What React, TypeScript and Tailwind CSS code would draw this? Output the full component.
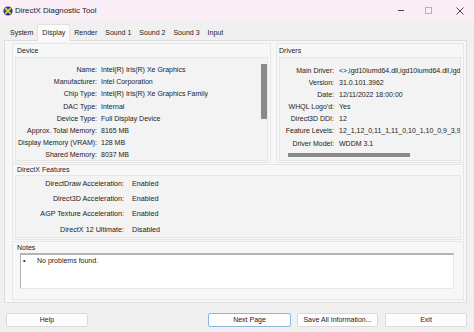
import React from "react";

const DEVICE_ROWS: [string, string][] = [
  ["Name:", "Intel(R) Iris(R) Xe Graphics"],
  ["Manufacturer:", "Intel Corporation"],
  ["Chip Type:", "Intel(R) Iris(R) Xe Graphics Family"],
  ["DAC Type:", "Internal"],
  ["Device Type:", "Full Display Device"],
  ["Approx. Total Memory:", "8165 MB"],
  ["Display Memory (VRAM):", "128 MB"],
  ["Shared Memory:", "8037 MB"],
];

const DRIVER_ROWS: [string, string][] = [
  ["Main Driver:", "<>,igd10iumd64.dll,igd10iumd64.dll,igd10iumd64.dll"],
  ["Version:", "31.0.101.3962"],
  ["Date:", "12/11/2022 18:00:00"],
  ["WHQL Logo'd:", "Yes"],
  ["Direct3D DDI:", "12"],
  ["Feature Levels:", "12_1,12_0,11_1,11_0,10_1,10_0,9_3,9_2,9_1"],
  ["Driver Model:", "WDDM 3.1"],
];

const FEATURES: [string, string][] = [
  ["DirectDraw Acceleration:", "Enabled"],
  ["Direct3D Acceleration:", "Enabled"],
  ["AGP Texture Acceleration:", "Enabled"],
  ["DirectX 12 Ultimate:", "Disabled"],
];

const TABS = ["System", "Display", "Render", "Sound 1", "Sound 2", "Sound 3", "Input"];

function DxIcon() {
  return (
    <svg width="10" height="10" viewBox="0 0 10 10">
      <circle cx="5" cy="5" r="4.6" fill="#21408f" />
      <circle cx="4" cy="3.6" r="2.2" fill="#4f74c8" opacity="0.6" />
      <path d="M2.6 2.6 L7.4 7.4 M7.4 2.6 L2.6 7.4" stroke="#f3c427" strokeWidth="1.7" strokeLinecap="round" />
    </svg>
  );
}

export default function App() {
  return (
    <div className="w-[474px] h-[332px] overflow-hidden bg-[#f0f0f0] flex flex-col text-[#1b1b1b] font-['Liberation_Sans',Arial,sans-serif] text-[7px]">
      {/* Title bar */}
      <div className="h-[21px] shrink-0 bg-[#f9eef6] flex items-center pl-[3px]">
        <DxIcon />
        <span className="ml-[2px] text-[7.9px] text-[#222]">DirectX Diagnostic Tool</span>
        <div className="ml-auto flex items-center h-full">
          <div className="w-[6px] h-[1px] bg-[#444] mr-[21px]" />
          <div className="w-[7px] h-[7px] border border-[#b5b5b5] mr-[24px]" />
          <svg width="8" height="8" viewBox="0 0 8 8" className="mr-[10px]">
            <path d="M0.5 0.5 L7.5 7.5 M7.5 0.5 L0.5 7.5" stroke="#333" strokeWidth="0.9" />
          </svg>
        </div>
      </div>

      {/* Tabs */}
      <div className="mt-[4px] h-[16px] shrink-0 flex pl-[6px] relative z-10">
        {TABS.map((t) => (
          <div
            key={t}
            className={
              t === "Display"
                ? "px-[4px] h-[17px] -mt-[1px] flex items-center bg-[#fbfbfb] border-x border-t border-[#e2e2e2] rounded-t-[2px]"
                : "px-[4px] h-[16px] flex items-center"
            }
          >
            {t}
          </div>
        ))}
      </div>

      {/* Panel */}
      <div className="ml-[4px] w-[463px] h-[263px] -mt-[1px] shrink-0 bg-[#f7f7f7] border border-[#dedede] pl-[7px] pt-[2px] flex flex-col">
        <div className="flex gap-[5px] h-[120px]">
          {/* Device */}
          <div className="w-[259px] border border-[#e6e6e6] flex flex-col">
            <div className="h-[13px] leading-[13px] pl-[4px]">Device</div>
            <div className="relative flex-1 mx-[2px] mb-[1px] border border-[#e6e6e6] bg-[#f3f3f3] pt-[6px] overflow-hidden">
              {DEVICE_ROWS.map(([k, v]) => (
                <div key={k} className="flex h-[12.2px] leading-[12.2px] whitespace-nowrap">
                  <span className="w-[81px] text-right">{k}</span>
                  <span className="ml-[4px]">{v}</span>
                </div>
              ))}
              <div className="absolute right-[0px] top-[6px] w-[6px] h-[55px] bg-[#8a8a8a]" />
            </div>
          </div>

          {/* Drivers */}
          <div className="w-[188px] border border-[#e6e6e6] flex flex-col">
            <div className="h-[13px] leading-[13px] pl-[2px]">Drivers</div>
            <div className="relative flex-1 mx-[2px] mb-[1px] border border-[#e6e6e6] bg-[#f3f3f3] pt-[6.5px] overflow-hidden">
              {DRIVER_ROWS.map(([k, v]) => (
                <div key={k} className="flex h-[12.2px] leading-[12.2px] whitespace-nowrap">
                  <span className="w-[54px] shrink-0 text-right">{k}</span>
                  <span className="ml-[5px]">{v}</span>
                </div>
              ))}
              <div className="absolute left-[8px] bottom-[3px] w-[122px] h-[4px] bg-[#8a8a8a]" />
            </div>
          </div>
        </div>

        {/* DirectX Features */}
        <div className="mt-[1px] w-[452px] h-[76px] border border-[#e6e6e6] flex flex-col">
          <div className="h-[10px] leading-[10px] pl-[4px]">DirectX Features</div>
          <div className="flex-1 mx-[2px] mb-[1px] border border-[#e6e6e6] bg-[#f3f3f3]">
            {FEATURES.map(([k, v]) => (
              <div key={k} className="flex h-[15.2px] leading-[15.2px] text-[7.2px] whitespace-nowrap">
                <span className="w-[108px] text-right">{k}</span>
                <span className="ml-[8px]">{v}</span>
              </div>
            ))}
          </div>
        </div>

        {/* Notes */}
        <div className="mt-[1px] w-[452px] h-[59px] border border-[#e6e6e6] flex flex-col">
          <div className="h-[11px] leading-[11px] pl-[4px]">Notes</div>
          <div className="ml-[7px] mr-[9px] h-[36px] bg-white border-t-2 border-l border-t-[#b3b3b3] border-l-[#b3b3b3] border-r border-b border-r-[#e8e8e8] border-b-[#e8e8e8] flex items-start pt-[1px] leading-[10px]">
            <span className="ml-[2px] w-[14px]">•</span>
            <span>No problems found.</span>
          </div>
        </div>
      </div>

      {/* Buttons */}
      <div className="mt-[10px] h-[14px] flex">
        <button className="ml-[6px] w-[82px] h-[14px] bg-[#fdfdfd] border border-[#dadada] rounded-[2px] text-[7px]">Help</button>
        <button className="ml-[120px] w-[83px] h-[14px] bg-[#fdfdfd] border border-[#8eb3de] rounded-[2px] text-[7px]">Next Page</button>
        <button className="ml-[6px] w-[81px] h-[14px] bg-[#fdfdfd] border border-[#dadada] rounded-[2px] text-[7px]">Save All Information...</button>
        <button className="ml-[7px] w-[82px] h-[14px] bg-[#fdfdfd] border border-[#dadada] rounded-[2px] text-[7px]">Exit</button>
      </div>
    </div>
  );
}
